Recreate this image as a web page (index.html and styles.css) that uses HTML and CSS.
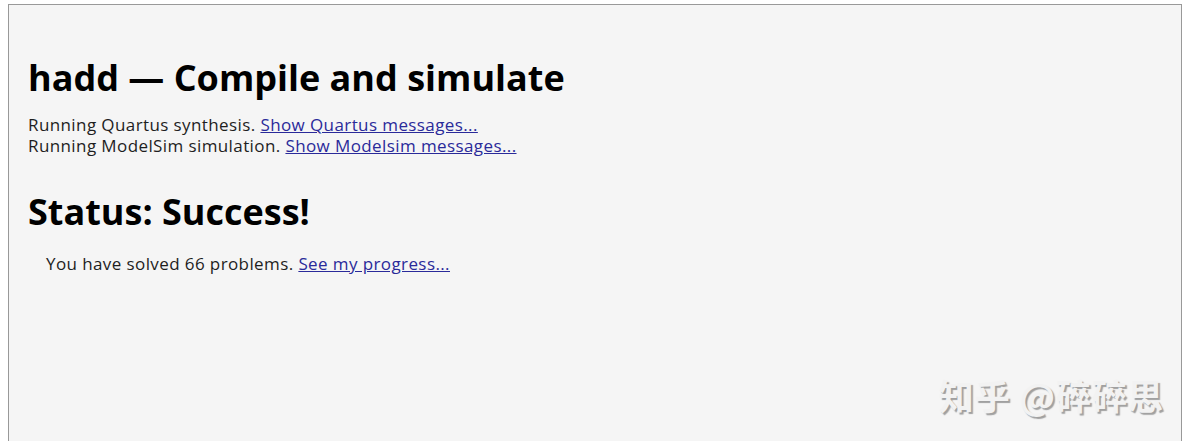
FILE: index.html
```html
<!DOCTYPE html>
<html>
<head>
<meta charset="utf-8">
<link rel="stylesheet" href="styles.css">
</head>
<body>
<div class="panel">
  <h1 class="title">hadd — Compile and simulate</h1>
  <div class="log">
    <div>Running Quartus synthesis. <a href="#">Show Quartus messages...</a></div>
    <div>Running ModelSim simulation. <a href="#">Show Modelsim messages...</a></div>
  </div>
  <h2 class="status">Status: Success!</h2>
  <p class="solved">You have solved 66 problems. <a href="#">See my progress...</a></p>
  <div class="watermark">知乎 @碎碎思</div>
</div>
</body>
</html>
```
FILE: styles.css
```css
html, body {
  margin: 0;
  padding: 0;
  background: #ffffff;
  height: 100%;
  overflow: hidden;
}
body {
  padding: 4px 13px 0 8px;
  box-sizing: border-box;
}
.panel {
  position: relative;
  height: 437px;
  box-sizing: border-box;
  background: #f5f5f5;
  border: 1px solid #999999;
  border-bottom: none;
  padding: 1px 19px 0 19px;
  font-family: "Open Sans", sans-serif;
  font-size: 17px;
  letter-spacing: 0.4px;
  color: #1e1e1e;
}
.title {
  font-family: "Open Sans", sans-serif;
  font-weight: 700;
  font-size: 36px;
  line-height: 44px;
  letter-spacing: 0;
  margin: 50px 0 14px 0;
  color: #000000;
}
.log {
  line-height: 21px;
}
a {
  color: #2a2a9a;
  text-decoration: underline;
}
.status {
  font-family: "Open Sans", sans-serif;
  font-weight: 700;
  font-size: 36px;
  line-height: 44px;
  letter-spacing: 0;
  margin: 34px 0 19px 0;
  color: #000000;
}
.solved {
  margin: 0 0 0 18px;
  line-height: 21px;
}
.watermark {
  position: absolute;
  right: 17px;
  top: 364px;
  font-family: "Noto Sans CJK SC", sans-serif;
  font-weight: 700;
  font-size: 35px;
  color: #f2f2f2;
  text-shadow: 2px 2px 1px #a0a0a0;
  letter-spacing: 1px;
}
```
